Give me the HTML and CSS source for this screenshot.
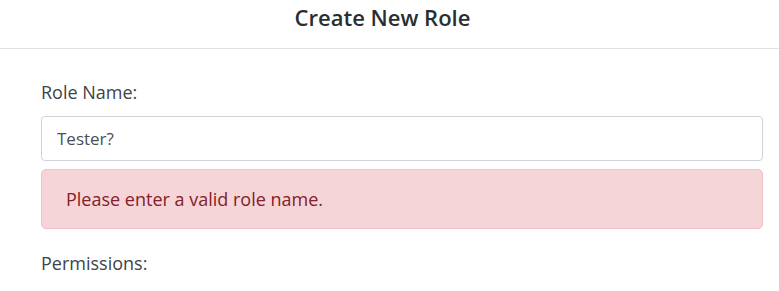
FILE: index.html
```html
<!DOCTYPE html>
<html lang="en">
<head>
    <meta charset="UTF-8">
    <title>Create New Role</title>
    <link rel="stylesheet" href="styles.css">
</head>
<body>
    <div class="modal">
        <div class="modal-header">
            <h1>Create New Role</h1>
        </div>
        <div class="modal-body">
            <form class="role-form">
                <label for="roleName">Role Name:</label>
                <input type="text" id="roleName" class="form-control" value="Tester?">
                <div class="alert" role="alert">Please enter a valid role name.</div>
                <label class="perm-label">Permissions:</label>
            </form>
        </div>
    </div>
</body>
</html>
```

FILE: styles.css
```css
body {
    margin: 0;
    font-family: "Open Sans", "Noto Sans", sans-serif;
    color: #212529;
    background: white;
    font-size: 18px;
}
.modal {
    width: 779px;
}
.modal-header {
    height: 49px;
    box-sizing: border-box;
    border-bottom: 1px solid #dee2e6;
    display: flex;
    align-items: flex-start;
    justify-content: center;
    padding: 2px 14px 0 0;
}
h1 {
    margin: 0;
    font-size: 22px;
    line-height: 30px;
    font-weight: 600;
    color: #2a2e33;
}
.modal-body {
    padding: 31px 16px 0 41px;
}
.role-form {
    display: flex;
    flex-direction: column;
}
label {
    color: #3d4349;
    font-size: 18px;
    line-height: 24px;
}
.form-control {
    margin-top: 12px;
    height: 45px;
    box-sizing: border-box;
    border: 1px solid #ced4da;
    border-radius: 4px;
    padding: 0 15px;
    font-family: inherit;
    font-size: 17px;
    color: #495057;
}
.alert {
    margin-top: 8px;
    height: 60px;
    box-sizing: border-box;
    display: flex;
    align-items: center;
    padding: 0 24px;
    background: #f5d5d8;
    border: 1px solid #f1c0c5;
    border-radius: 5px;
    color: #842029;
    font-size: 18px;
}
.perm-label {
    margin-top: 22px;
}
```
